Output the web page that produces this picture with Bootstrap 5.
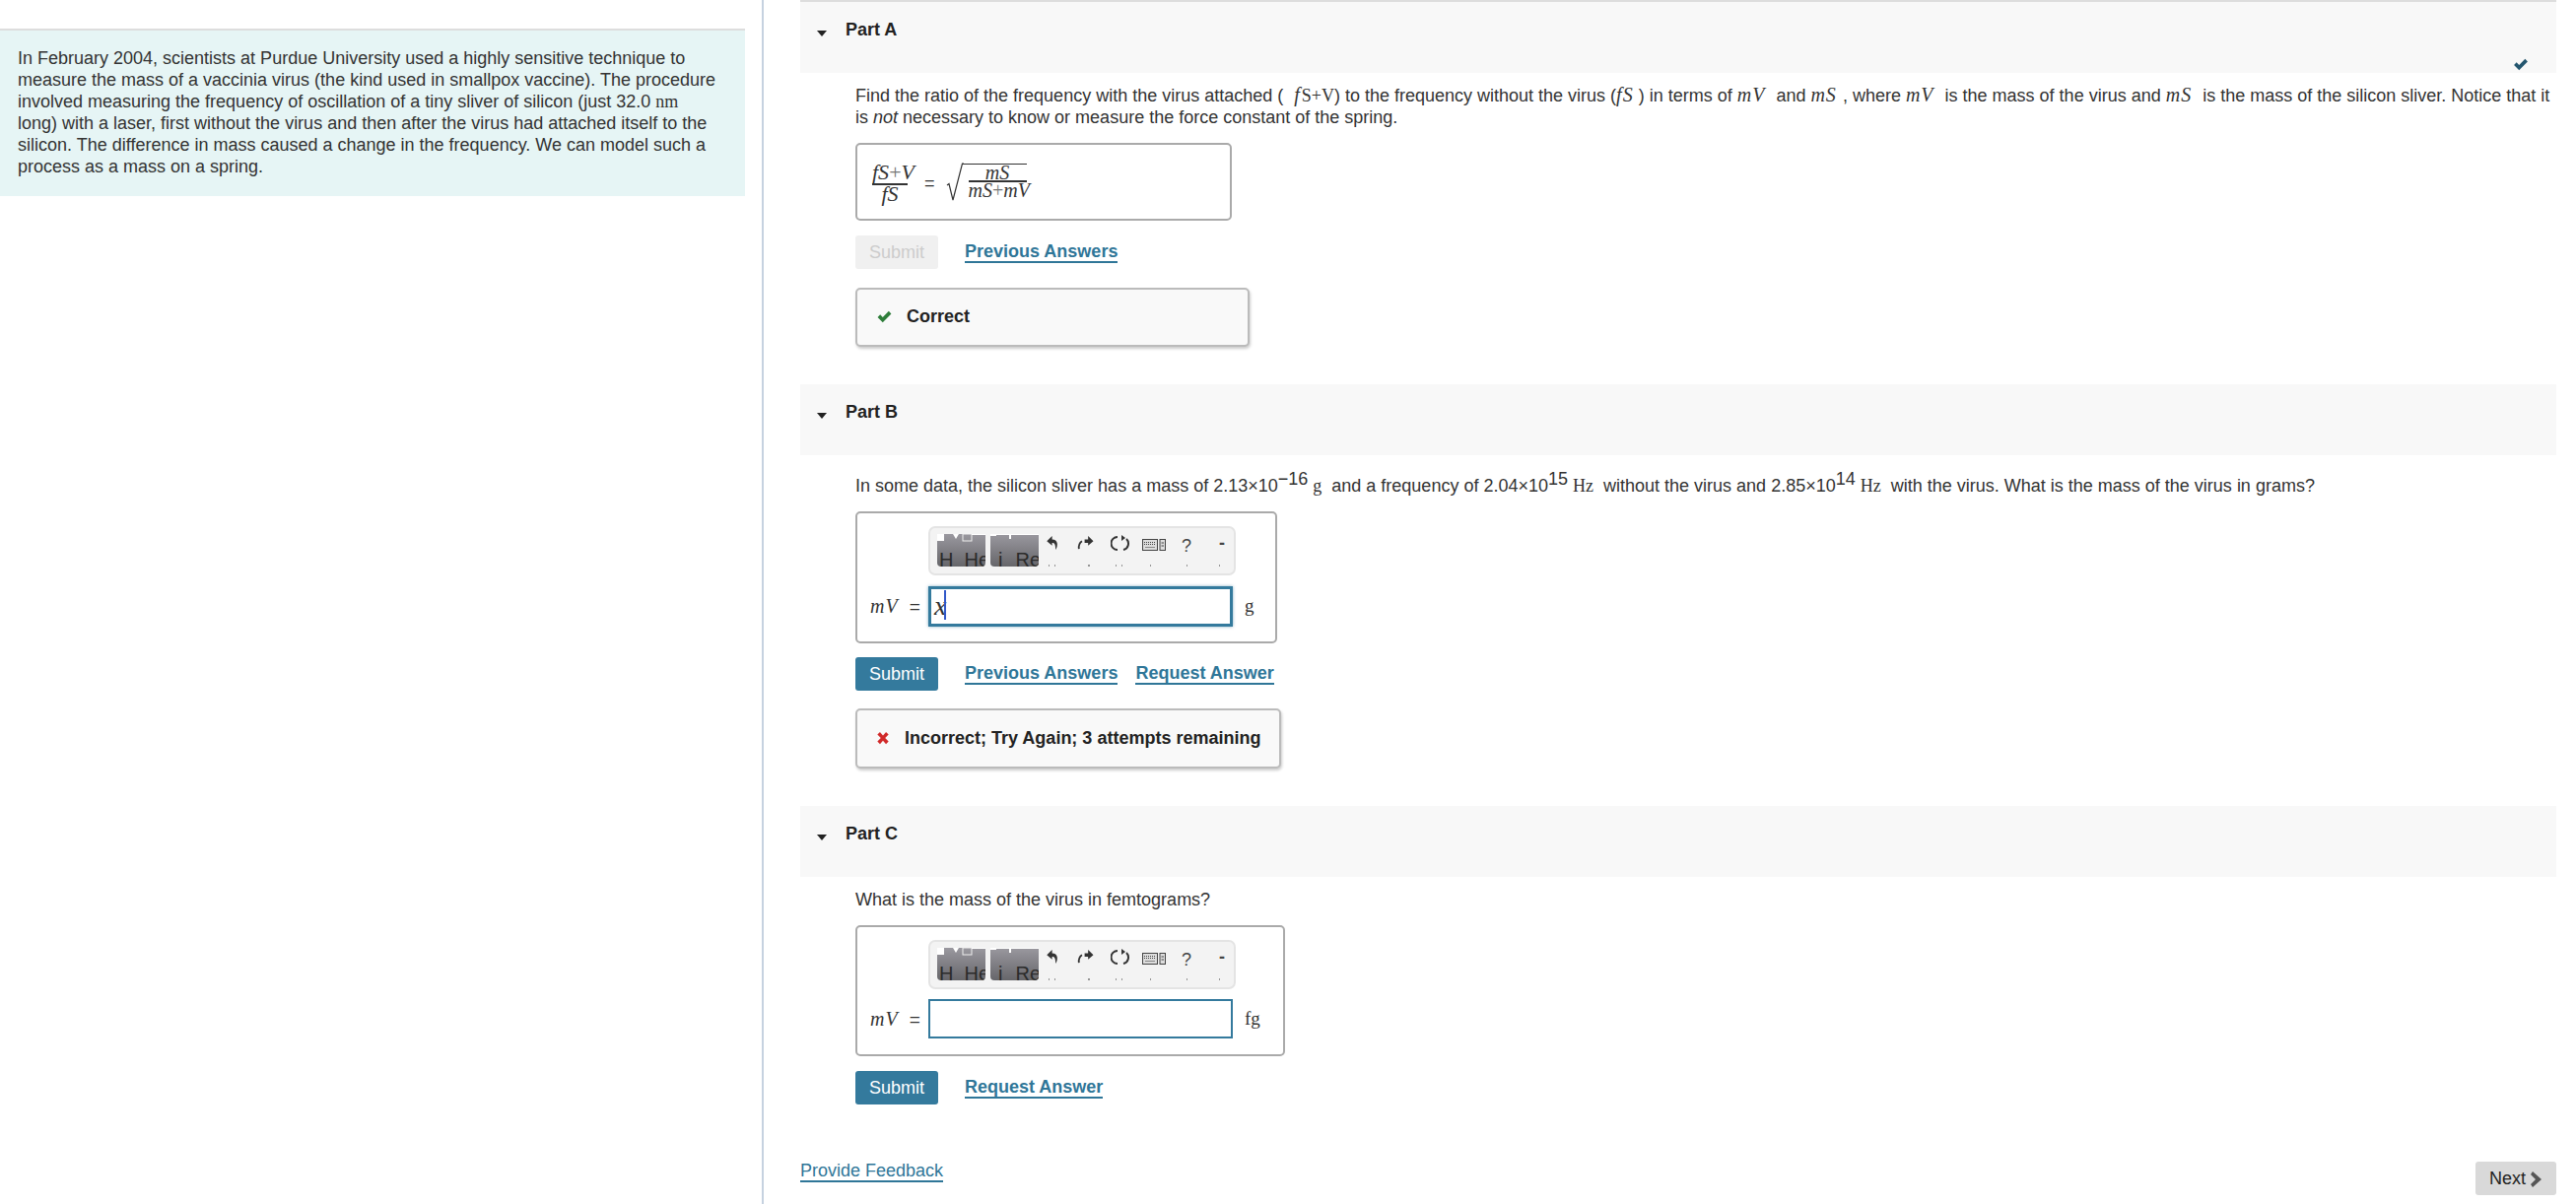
<!DOCTYPE html>
<html lang="en">
<head>
  <meta charset="UTF-8" />
  <title>Part A, B, C</title>
  <link href="https://cdn.jsdelivr.net/npm/bootstrap@5.3.3/dist/css/bootstrap.min.css" rel="stylesheet"/>
  <style>
    html, body { height: 100%; }
    body {
      font-family: "Liberation Sans", Arial, sans-serif;
      font-size: 18px;
      line-height: 22px;
      color: #333;
      background: #fff;
      overflow: hidden;
    }
    .page-wrap { height: 1222px; }
    .side-col {
      width: 775px;
      flex: none;
      border-right: 2px solid #c6d2e0;
      padding-top: 29px;
    }
    .intro-box {
      width: 756px;
      height: 170px;
      background: #e6f5f5;
      border-top: 2px solid #ddd;
      padding: 17px 27px 0 18px;
    }
    .main-col { width: 1839px; flex: none; padding: 0 20px 0 37px; position: relative; }
    .part-head {
      height: 72px;
      background: #f8f8f8;
      padding: 17px 0 0 46px;
      position: relative;
      font-weight: 700;
      color: #222;
    }
    .part-a { border-top: 2px solid #ddd; height: 74px; }
    .caret-down {
      position: absolute;
      left: 17px;
      top: 29px;
      border-left: 5.5px solid transparent;
      border-right: 5.5px solid transparent;
      border-top: 6px solid #222;
    }
    .part-check { position: absolute; right: 28px; bottom: 2px; }
    .part-body { padding-left: 56px; }
    .ans-box {
      border: 2px solid #aaa;
      border-radius: 5px;
      background: #fff;
    }
    .m { font-family: "Liberation Serif", serif; font-style: italic; font-size: 20px; letter-spacing: 1px; }
    .u { font-family: "Liberation Serif", serif; line-height: 0; }
    .q-a .m { line-height: 0; padding-right: 1px; }
    .gap-l { margin-left: 6px; }
    .gap-r { margin-right: 4px; }
    sup.pow { font-size: 18px; line-height: 0; top: -7px; vertical-align: baseline; position: relative; }

    /* answer formula in Part A */
    .frac-out { width: 36px; flex: none; }
    .frac-num { font-size: 22px; line-height: 22px; white-space: nowrap; letter-spacing: 0; height: 22px; }
    .frac-plus { font-family: "Liberation Serif", serif; font-style: normal; color: #777; }
    .frac-line { height: 2px; background: #333; }
    .frac-den { font-size: 22px; line-height: 18px; text-align: center; letter-spacing: 0; }
    .eq-sign { margin: 3px 11px 0 17px; }
    .root-in { border-top: 1px solid #333; width: 65px; padding: 0 0 0 6px; margin-left: -1px; margin-top: -2px; }
    .root-num { font-size: 20px; line-height: 16px; text-align: center; letter-spacing: 0; }
    .root-den { font-size: 20px; line-height: 17px; white-space: nowrap; letter-spacing: 0; }

    .sub-btn {
      width: 84px;
      height: 34px;
      padding: 0;
      border: 0;
      border-radius: 3px;
      font-size: 18px;
      line-height: 34px;
      background: #347a9d;
      color: #fff;
    }
    .sub-btn:disabled { background: #f0f0f0; color: #ccc; opacity: 1; }
    .act-link { color: #2f7698; font-weight: 700; text-decoration: none; border-bottom: 2px solid #2f7698; line-height: 20px; }
    .feed-box {
      background: #f9f9f9;
      border: 2px solid #bbb;
      border-radius: 5px;
      box-shadow: 1px 2px 3px rgba(0,0,0,.2);
      font-weight: 700;
      color: #222;
      padding-bottom: 2px;
    }
    .tool-bar {
      width: 312px;
      height: 50px;
      background: #f3f3f3;
      border: 2px solid #e4e4e4;
      border-radius: 7px;
      position: relative;
      padding: 6px 0 0 7px;
      gap: 5px;
    }
    .sprite {
      width: 49px;
      height: 33px;
      overflow: hidden;
      border-radius: 0 0 4px 4px;
      background: linear-gradient(#9a989f, #66666a);
      color: #2b2b2b;
      font-size: 20px;
      line-height: 20px;
      padding-top: 16px;
      white-space: nowrap;
      position: relative;
    }
    .sp-one { padding-left: 2px; }
    .sp-one span { margin-left: 11px; }
    .sp-two { padding-left: 8px; }
    .sp-two span { margin-left: 13px; }
    .sprite svg { position: absolute; left: 0; top: 0; }
    .t-ico { position: absolute; top: 7px; }
    .t-undo { left: 118px; }
    .t-redo { left: 148px; }
    .t-reset { left: 183px; }
    .t-keys { left: 215px; top: 11px; }
    .t-dots { left: 118px; top: 37px; }
    .t-q { position: absolute; top: 7px; left: 255px; font-size: 18px; color: #444; }
    .t-dash { position: absolute; top: 4px; left: 293px; font-size: 18px; font-weight: 700; color: #444; }
    .math-row { height: 42px; }
    .m-lab { width: 72px; flex: none; padding-left: 13px; white-space: nowrap; }
    .m-lab .m { padding-right: 1px; }
    .m-lab .eq-in { margin-left: 10px; font-size: 19px; }
    .ans-input {
      width: 309px;
      height: 41px;
      border: 3px solid #347a9d;
      box-shadow: 0 0 3px rgba(52,122,157,.6);
      background: #fff;
      position: relative;
      padding-left: 3px;
      font-size: 28px;
      line-height: 34px;
      letter-spacing: 0;
    }
    .ans-plain { border-width: 2px; box-shadow: none; height: 40px; }
    .t-cursor { position: absolute; left: 13px; top: 1px; width: 2px; height: 30px; background: #3258c8; }
    .foot-link { color: #2f7698; text-decoration: none; border-bottom: 2px solid #2f7698; }
    .next-btn {
      position: absolute;
      right: 20px;
      top: 1179px;
      width: 82px;
      height: 34px;
      padding: 0;
      border: 0;
      border-radius: 3px;
      background: #d9d9d9;
      color: #222;
      font-size: 18px;
      line-height: 34px;
    }

    /* vertical rhythm of the right column */
    .q-a { padding-top: 12px; }
    .box-a { width: 382px; height: 79px; margin-top: 15px; padding-left: 15px; }
    .btn-row { gap: 27px; margin-top: 15px; height: 34px; }
    .row-b { margin-top: 14px; }
    .second-link { margin-left: -9px; }
    .fb-a { width: 400px; height: 60px; margin-top: 19px; padding-left: 19px; margin-bottom: 38px; }
    .fb-a .fb-text { margin-left: 14px; }
    .q-b { padding-top: 20px; }
    .box-b { width: 428px; height: 134px; margin-top: 15px; padding: 13px 0 0 72px; position: relative; }
    .box-c { width: 436px; height: 133px; margin-top: 15px; padding: 13px 0 0 72px; position: relative; }
    .input-row { margin-left: -72px; margin-top: 10px; }
    .box-c .input-row { margin-top: 9px; }
    .fb-b { width: 432px; height: 61px; margin-top: 18px; padding-left: 19px; margin-bottom: 38px; }
    .fb-b .fb-text { margin-left: 15px; }
    .q-c { padding-top: 12px; }
    .unit { font-size: 19px; margin-left: 12px; line-height: 22px; }
    .feed-row { margin-top: 56px; }
  </style>
</head>
<body>
  <div class="d-flex page-wrap">
    <div class="side-col">
      <div class="intro-box">
        In February 2004, scientists at Purdue University used a highly sensitive technique to measure the mass of a vaccinia virus (the kind used in smallpox vaccine). The procedure involved measuring the frequency of oscillation of a tiny sliver of silicon (just 32.0 <span class="u">nm</span> long) with a laser, first without the virus and then after the virus had attached itself to the silicon. The difference in mass caused a change in the frequency. We can model such a process as a mass on a spring.
      </div>
    </div>

    <div class="main-col">
      <!-- Part A -->
      <div class="part-head part-a">
        <span class="caret-down"></span>Part A
        <svg class="part-check" width="16" height="13" viewBox="0 0 18 15"><path d="M1 8 L4 5 L7 8 L14 1 L17 4 L7 14 Z" fill="#24566f"/></svg>
      </div>
      <div class="part-body">
        <p class="mb-0 q-a">Find the ratio of the frequency with the virus attached ( <span class="m gap-l">f</span><span class="u">S+V</span>) to the frequency without the virus (<span class="m gap-r">fS</span>) in terms of <span class="m">mV</span>&nbsp; and <span class="m">mS</span> , where <span class="m">mV</span>&nbsp; is the mass of the virus and <span class="m">mS</span>&nbsp; is the mass of the silicon sliver. Notice that it is <em>not</em> necessary to know or measure the force constant of the spring.</p>
        <div class="ans-box box-a d-flex align-items-center">
          <div class="frac-out m">
            <div class="frac-num">fS<span class="frac-plus">+</span>V</div>
            <div class="frac-line"></div>
            <div class="frac-den">fS</div>
          </div>
          <span class="eq-sign">=</span>
          <svg width="18" height="40" viewBox="0 0 18 40"><path d="M1 23 L3 21.500 L7 38 L16.500 1 L18 1" fill="none" stroke="#333" stroke-width="1.2"/></svg>
          <div class="root-in m">
            <div class="root-num">mS</div>
            <div class="frac-line"></div>
            <div class="root-den">mS<span class="frac-plus">+</span>mV</div>
          </div>
        </div>
        <div class="d-flex align-items-center btn-row">
          <button class="sub-btn" disabled>Submit</button>
          <a href="#" class="act-link">Previous Answers</a>
        </div>
        <div class="feed-box fb-a d-flex align-items-center">
          <svg width="17" height="13" viewBox="0 0 18 15"><path d="M1 8 L4 5 L7 8 L14 1 L17 4 L7 14 Z" fill="#2e7d3a"/></svg>
          <span class="fb-text">Correct</span>
        </div>
      </div>

      <!-- Part B -->
      <div class="part-head"><span class="caret-down"></span>Part B</div>
      <div class="part-body">
        <p class="mb-0 q-b">In some data, the silicon sliver has a mass of 2.13×10<sup class="pow">−16</sup> <span class="u">g</span>&nbsp; and a frequency of 2.04×10<sup class="pow">15</sup> <span class="u">Hz</span>&nbsp; without the virus and 2.85×10<sup class="pow">14</sup> <span class="u">Hz</span>&nbsp; with the virus. What is the mass of the virus in grams?</p>
        <div class="ans-box box-b">
          <div class="tool-bar d-flex">
            <div class="sprite sp-one"><svg width="49" height="10" viewBox="0 0 49 10"><rect width="7" height="7" fill="#fff"/><path d="M16 0 L19 5 L22 0" fill="#fff"/><rect x="26" y="0" width="9" height="7" fill="none" stroke="#eee"/><rect x="35" width="14" height="1" fill="#fff"/></svg>H<span>He</span></div>
            <div class="sprite sp-two"><svg width="49" height="10" viewBox="0 0 49 10"><rect width="49" height="1" fill="#fff"/><rect x="0" width="6" height="2" fill="#fff"/><rect x="19" y="0" width="2" height="5" fill="#fff"/></svg>i<span>Re</span></div>
            <svg class="t-ico t-undo" width="13" height="16" viewBox="0 0 14 18"><path d="M6 1 L0 7 L6 12 V9 C9 9 10 11 10 17 C13 12 13 5 6 5 Z" fill="#333"/></svg>
            <svg class="t-ico t-redo" width="19" height="16" viewBox="0 0 20 18"><path d="M13 1 L19 7 L13 12 V9 H9 V5 H13 Z" fill="#333"/><path d="M6 7 C3 9 2 12 2.500 16" fill="none" stroke="#333" stroke-width="2"/></svg>
            <svg class="t-ico t-reset" width="20" height="16" viewBox="0 0 20 16"><path d="M7 2 A6.500 6.500 0 0 0 7 15 M13 15 A6.500 6.500 0 0 0 16 4" fill="none" stroke="#333" stroke-width="2"/><path d="M11 0 L15 3 L11 6 Z" fill="#333"/></svg>
            <svg class="t-ico t-keys" width="24" height="12" viewBox="0 0 24 12"><rect x=".5" y=".5" width="15" height="11" fill="#ddd" stroke="#444"/><path d="M2 3.500 H14 M2 5.500 H14" stroke="#444" stroke-dasharray="1 1"/><path d="M3 8.500 H13" stroke="#888"/><rect x="18" y=".5" width="5.500" height="11" fill="#ddd" stroke="#444"/><path d="M19.500 4 H22 M19.500 7 H22" stroke="#444"/></svg>
            <span class="t-q">?</span>
            <span class="t-dash">-</span>
            <svg class="t-ico t-dots" width="180" height="2" viewBox="0 0 180 2"><path d="M2 1 H3 M8 1 H9 M42 1 H44 M70 1 H71 M76 1 H77 M105 1 H106 M142 1 H143 M175 1 H176" stroke="#777" stroke-width="1.500"/></svg>
          </div>
          <div class="d-flex align-items-center math-row input-row">
            <div class="m-lab"><span class="m">mV</span><span class="eq-in">=</span></div>
            <div class="ans-input m">x<span class="t-cursor"></span></div>
            <span class="u unit">g</span>
          </div>
        </div>
        <div class="d-flex align-items-center btn-row row-b">
          <button class="sub-btn">Submit</button>
          <a href="#" class="act-link">Previous Answers</a>
          <a href="#" class="act-link second-link">Request Answer</a>
        </div>
        <div class="feed-box fb-b d-flex align-items-center">
          <svg width="14" height="14" viewBox="0 0 15 16"><path d="M1 4 L4 1 L7.500 5 L11 1 L14 4 L10 8 L14 12 L11 15 L7.500 11 L4 15 L1 12 L5 8 Z" fill="#d12a2a"/></svg>
          <span class="fb-text">Incorrect; Try Again; 3 attempts remaining</span>
        </div>
      </div>

      <!-- Part C -->
      <div class="part-head"><span class="caret-down"></span>Part C</div>
      <div class="part-body">
        <p class="mb-0 q-c">What is the mass of the virus in femtograms?</p>
        <div class="ans-box box-c">
          <div class="tool-bar d-flex">
            <div class="sprite sp-one"><svg width="49" height="10" viewBox="0 0 49 10"><rect width="7" height="7" fill="#fff"/><path d="M16 0 L19 5 L22 0" fill="#fff"/><rect x="26" y="0" width="9" height="7" fill="none" stroke="#eee"/><rect x="35" width="14" height="1" fill="#fff"/></svg>H<span>He</span></div>
            <div class="sprite sp-two"><svg width="49" height="10" viewBox="0 0 49 10"><rect width="49" height="1" fill="#fff"/><rect x="0" width="6" height="2" fill="#fff"/><rect x="19" y="0" width="2" height="5" fill="#fff"/></svg>i<span>Re</span></div>
            <svg class="t-ico t-undo" width="13" height="16" viewBox="0 0 14 18"><path d="M6 1 L0 7 L6 12 V9 C9 9 10 11 10 17 C13 12 13 5 6 5 Z" fill="#333"/></svg>
            <svg class="t-ico t-redo" width="19" height="16" viewBox="0 0 20 18"><path d="M13 1 L19 7 L13 12 V9 H9 V5 H13 Z" fill="#333"/><path d="M6 7 C3 9 2 12 2.500 16" fill="none" stroke="#333" stroke-width="2"/></svg>
            <svg class="t-ico t-reset" width="20" height="16" viewBox="0 0 20 16"><path d="M7 2 A6.500 6.500 0 0 0 7 15 M13 15 A6.500 6.500 0 0 0 16 4" fill="none" stroke="#333" stroke-width="2"/><path d="M11 0 L15 3 L11 6 Z" fill="#333"/></svg>
            <svg class="t-ico t-keys" width="24" height="12" viewBox="0 0 24 12"><rect x=".5" y=".5" width="15" height="11" fill="#ddd" stroke="#444"/><path d="M2 3.500 H14 M2 5.500 H14" stroke="#444" stroke-dasharray="1 1"/><path d="M3 8.500 H13" stroke="#888"/><rect x="18" y=".5" width="5.500" height="11" fill="#ddd" stroke="#444"/><path d="M19.500 4 H22 M19.500 7 H22" stroke="#444"/></svg>
            <span class="t-q">?</span>
            <span class="t-dash">-</span>
            <svg class="t-ico t-dots" width="180" height="2" viewBox="0 0 180 2"><path d="M2 1 H3 M8 1 H9 M42 1 H44 M70 1 H71 M76 1 H77 M105 1 H106 M142 1 H143 M175 1 H176" stroke="#777" stroke-width="1.500"/></svg>
          </div>
          <div class="d-flex align-items-center math-row input-row">
            <div class="m-lab"><span class="m">mV</span><span class="eq-in">=</span></div>
            <div class="ans-input ans-plain"></div>
            <span class="u unit">fg</span>
          </div>
        </div>
        <div class="d-flex align-items-center btn-row">
          <button class="sub-btn">Submit</button>
          <a href="#" class="act-link">Request Answer</a>
        </div>
      </div>

      <div class="feed-row"><a href="#" class="foot-link">Provide Feedback</a></div>
      <button class="next-btn">Next <svg width="12" height="16" viewBox="0 0 12 16"><path d="M2 0 L11 8 L2 16 L0 13 L5 8 L0 3 Z" fill="#555"/></svg></button>
    </div>
  </div>
</body>
</html>
